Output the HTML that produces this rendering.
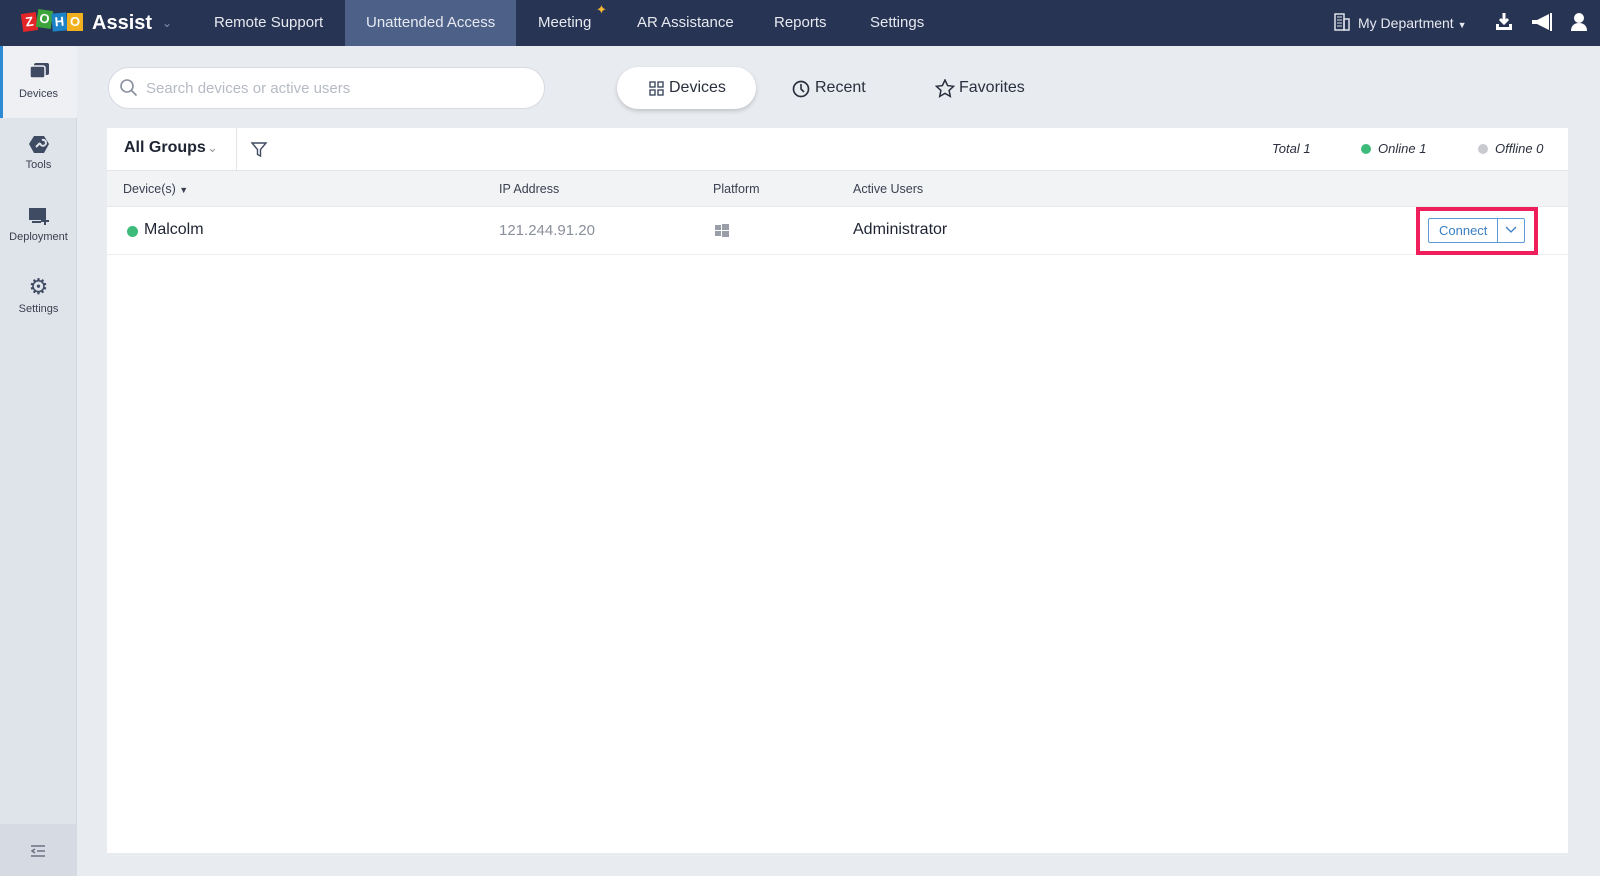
<!DOCTYPE html>
<html><head><meta charset="utf-8"><style>
*{box-sizing:border-box;margin:0;padding:0}
body{width:1600px;height:876px;background:#e8ebf0;font-family:"Liberation Sans",sans-serif;position:relative;overflow:hidden;color:#2a2f3d}
.abs{position:absolute}
.top{left:0;top:0;width:1600px;height:46px;background:#283453}
.nav{top:0;height:46px;line-height:46px;color:#e6e9f0;font-size:15px}
.side{left:0;top:46px;width:77px;height:830px;background:#dfe3ea;border-right:1px solid #d0d5de}
.si{left:0;width:77px;text-align:center;font-size:11px;color:#3a4050}
.panel{left:107px;top:128px;width:1461px;height:725px;background:#fff}
</style></head><body>
<div class="abs top"></div>
<!-- logo -->
<div class="abs" style="left:22px;top:13px;width:15px;height:18px;background:#e42527;transform:rotate(-8deg);color:#fff;font-weight:bold;font-size:13px;text-align:center;line-height:18px">Z</div>
<div class="abs" style="left:37px;top:10px;width:15px;height:18px;background:#3ca43a;transform:rotate(8deg);color:#fff;font-weight:bold;font-size:13px;text-align:center;line-height:18px">O</div>
<div class="abs" style="left:52px;top:13px;width:15px;height:18px;background:#1d83c6;transform:rotate(-5deg);color:#fff;font-weight:bold;font-size:13px;text-align:center;line-height:18px">H</div>
<div class="abs" style="left:67px;top:13px;width:16px;height:18px;background:#f2b01e;color:#fff;font-weight:bold;font-size:13px;text-align:center;line-height:18px">O</div>
<div class="abs nav" style="left:92px;font-size:20px;font-weight:bold;color:#fff">Assist</div>
<div class="abs nav" style="left:162px;color:#8b93a8;font-size:12px">&#8964;</div>
<div class="abs nav" style="left:214px">Remote Support</div>
<div class="abs" style="left:345px;top:0;width:171px;height:46px;background:#4d6088"></div>
<div class="abs nav" style="left:366px">Unattended Access</div>
<div class="abs nav" style="left:538px">Meeting</div>
<div class="abs" style="left:596px;top:2px;color:#f5b731;font-size:13px">✦</div>
<div class="abs nav" style="left:637px">AR Assistance</div>
<div class="abs nav" style="left:774px">Reports</div>
<div class="abs nav" style="left:870px">Settings</div>
<svg class="abs" style="left:1334px;top:13px" width="16" height="18"><rect x="1" y="1" width="9" height="16" fill="none" stroke="#dde2ea" stroke-width="1.5"/><rect x="10" y="6" width="5" height="11" fill="none" stroke="#dde2ea" stroke-width="1.5"/><path d="M3 4h5M3 7h5M3 10h5M3 13h5" stroke="#dde2ea"/></svg>
<div class="abs nav" style="left:1358px;font-size:14px">My Department <span style="font-size:9px">▼</span></div>
<svg class="abs" style="left:1494px;top:12px" width="20" height="20"><path d="M10 1v10M6 7l4 4 4-4" stroke="#fff" stroke-width="3" fill="none"/><path d="M2 12v6h16v-6h-3v3H5v-3z" fill="#fff"/></svg>
<svg class="abs" style="left:1530px;top:12px" width="24" height="20"><path d="M2 8h5l12-6v16L7 12H2z" fill="#fff"/><rect x="20" y="1" width="2" height="18" fill="#fff"/></svg>
<svg class="abs" style="left:1570px;top:12px" width="18" height="20"><circle cx="9" cy="6" r="5" fill="#fff"/><path d="M1 19c0-6 4-8 8-8s8 2 8 8z" fill="#fff"/></svg>

<div class="abs side"></div>
<div class="abs" style="left:0;top:46px;width:77px;height:72px;background:#eef0f4;border-left:3px solid #2d8bd6"></div>
<svg class="abs" style="left:29px;top:63px" width="22" height="18"><rect x="5" y="0" width="15" height="12" rx="2" fill="#3f4a63"/><rect x="1" y="3" width="15" height="12" rx="2" fill="#3f4a63" stroke="#eef0f4" stroke-width="1.5"/></svg>
<div class="abs si" style="top:88px">Devices</div>
<svg class="abs" style="left:29px;top:135px" width="20" height="19"><path d="M5 1h10l5 8-5 9H5L0 9z" fill="#3f4a63"/><path d="M7 12l4-4m0 0a3 3 0 1 0 2-3" stroke="#dfe3ea" stroke-width="2" fill="none"/></svg>
<div class="abs si" style="top:159px">Tools</div>
<svg class="abs" style="left:29px;top:208px" width="22" height="18"><rect x="0" y="0" width="17" height="12" fill="#3f4a63"/><path d="M16 9v8M12 13h8" stroke="#3f4a63" stroke-width="2"/><rect x="3" y="13" width="9" height="2" fill="#3f4a63"/></svg>
<div class="abs si" style="top:231px">Deployment</div>
<div class="abs" style="left:0;top:274px;width:77px;text-align:center;font-size:22px;color:#3f4a63">⚙</div>
<div class="abs si" style="top:303px">Settings</div>
<div class="abs" style="left:0;top:824px;width:77px;height:52px;background:#d6dae2"></div>
<svg class="abs" style="left:31px;top:845px" width="14" height="12"><path d="M0 1h14M6 6h8M0 11h14M4 4L1 6l3 2" stroke="#6a7285" stroke-width="1.5" fill="none"/></svg>

<!-- search -->
<div class="abs" style="left:108px;top:67px;width:437px;height:42px;background:#fff;border:1px solid #d6dae2;border-radius:21px"></div>
<svg class="abs" style="left:120px;top:79px" width="18" height="18"><circle cx="7" cy="7" r="6" stroke="#8a90a0" stroke-width="1.6" fill="none"/><path d="M11.5 11.5l5 5" stroke="#8a90a0" stroke-width="1.8"/></svg>
<div class="abs" style="left:146px;top:80px;font-size:15px;color:#b6bac4">Search devices or active users</div>
<div class="abs" style="left:617px;top:67px;width:139px;height:42px;background:#fff;border-radius:21px;box-shadow:0 2px 4px rgba(0,0,0,.18)"></div>
<svg class="abs" style="left:649px;top:81px" width="15" height="15" fill="none" stroke="#3f4a63" stroke-width="1.4"><rect x="1" y="1" width="5" height="5"/><rect x="9" y="1" width="5" height="5"/><rect x="1" y="9" width="5" height="5"/><rect x="9" y="9" width="5" height="5"/></svg>
<div class="abs" style="left:669px;top:79px;font-size:16px;color:#2a2f3d">Devices</div>
<svg class="abs" style="left:792px;top:80px" width="18" height="18"><circle cx="9" cy="9" r="7.5" stroke="#2a2f3d" stroke-width="1.7" fill="none"/><path d="M9 4v5l3 3" stroke="#2a2f3d" stroke-width="1.6" fill="none"/></svg>
<div class="abs" style="left:815px;top:79px;font-size:16px">Recent</div>
<svg class="abs" style="left:935px;top:79px" width="20" height="19"><path d="M10 1l2.6 5.6 6 .7-4.5 4.1 1.2 6L10 14.4 4.7 17.4l1.2-6L1.4 7.3l6-.7z" stroke="#2a2f3d" stroke-width="1.5" fill="none"/></svg>
<div class="abs" style="left:959px;top:79px;font-size:16px">Favorites</div>

<div class="abs panel"></div>
<div class="abs" style="left:236px;top:128px;width:1px;height:42px;background:#e2e4e9"></div>
<div class="abs" style="left:124px;top:139px;font-size:16px;font-weight:bold;color:#1f2433">All Groups</div>
<div class="abs" style="left:207px;top:140px;font-size:13px;color:#999">&#8964;</div>
<svg class="abs" style="left:251px;top:142px" width="16" height="15"><path d="M1 1h14l-5.5 6.5V14l-3-1.5V7.5z" stroke="#3f4a63" stroke-width="1.4" fill="none"/></svg>
<div class="abs" style="left:1272px;top:141px;font-size:13px;font-style:italic">Total 1</div>
<div class="abs" style="left:1361px;top:144px;width:10px;height:10px;border-radius:50%;background:#3dbb7b"></div>
<div class="abs" style="left:1378px;top:141px;font-size:13px;font-style:italic">Online 1</div>
<div class="abs" style="left:1478px;top:144px;width:10px;height:10px;border-radius:50%;background:#c8cad0"></div>
<div class="abs" style="left:1495px;top:141px;font-size:13px;font-style:italic">Offline 0</div>
<div class="abs" style="left:107px;top:170px;width:1461px;height:37px;background:#f2f3f5;border-top:1px solid #e2e4e9;border-bottom:1px solid #e6e8ec"></div>
<div class="abs" style="left:123px;top:182px;font-size:12.5px;color:#3a4050">Device(s) <span style="font-size:9px">▼</span></div>
<div class="abs" style="left:499px;top:182px;font-size:12.5px;color:#3a4050">IP Address</div>
<div class="abs" style="left:713px;top:182px;font-size:12.5px;color:#3a4050">Platform</div>
<div class="abs" style="left:853px;top:182px;font-size:12.5px;color:#3a4050">Active Users</div>
<div class="abs" style="left:107px;top:254px;width:1461px;height:1px;background:#eceef1"></div>
<div class="abs" style="left:127px;top:226px;width:11px;height:11px;border-radius:50%;background:#3dbb7b"></div>
<div class="abs" style="left:144px;top:221px;font-size:16px;color:#1f2433">Malcolm</div>
<div class="abs" style="left:499px;top:222px;font-size:15px;color:#8a8f9b">121.244.91.20</div>
<svg class="abs" style="left:715px;top:224px" width="14" height="14" fill="#9a9ea8"><rect x="0" y="1" width="6" height="5"/><rect x="7" y="0" width="7" height="6"/><rect x="0" y="7" width="6" height="5"/><rect x="7" y="7" width="7" height="6"/></svg>
<div class="abs" style="left:853px;top:221px;font-size:16px;color:#1f2433">Administrator</div>
<div class="abs" style="left:1416px;top:207px;width:122px;height:48px;border:4px solid #ef1f5b"></div>
<div class="abs" style="left:1428px;top:218px;width:97px;height:25px;border:1px solid #5a9ad6;border-radius:2px"></div>
<div class="abs" style="left:1497px;top:218px;width:1px;height:25px;background:#5a9ad6"></div>
<div class="abs" style="left:1439px;top:223px;font-size:13px;color:#3a7fc4">Connect</div>
<svg class="abs" style="left:1505px;top:226px" width="12" height="8"><path d="M1 1l5 5 5-5" stroke="#3a7fc4" stroke-width="1.3" fill="none"/></svg>
</body></html>
